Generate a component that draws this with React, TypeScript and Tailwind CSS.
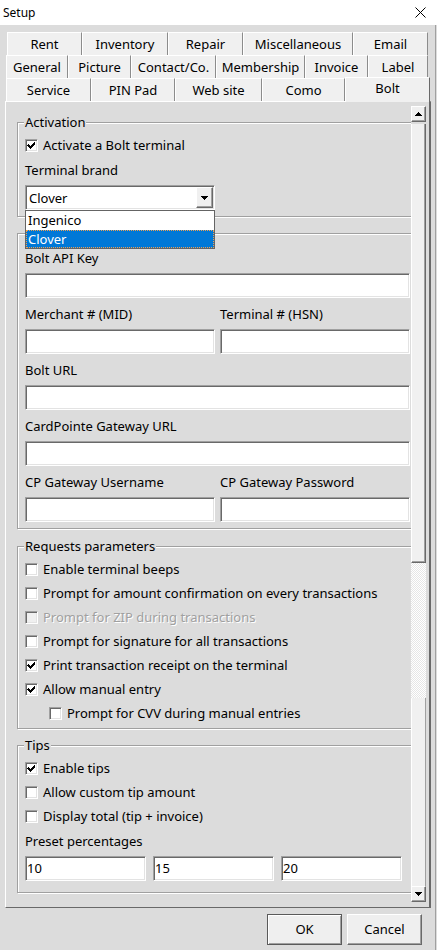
import React from "react";

type TabDef = { label: string; w: string; selected?: boolean };

const row1: TabDef[] = [
  { label: "Rent", w: "w-[75px]" },
  { label: "Inventory", w: "w-[86px]" },
  { label: "Repair", w: "w-[75px]" },
  { label: "Miscellaneous", w: "w-[110px]" },
  { label: "Email", w: "w-[75px]" },
];

const row2: TabDef[] = [
  { label: "General", w: "w-[62px]" },
  { label: "Picture", w: "w-[63px]" },
  { label: "Contact/Co.", w: "w-[85px]" },
  { label: "Membership", w: "w-[89px]" },
  { label: "Invoice", w: "w-[63px]" },
  { label: "Label", w: "w-[60px]" },
];

const row3: TabDef[] = [
  { label: "Service", w: "w-[85px]" },
  { label: "PIN Pad", w: "w-[84px]" },
  { label: "Web site", w: "w-[87px]" },
  { label: "Como", w: "w-[83px]" },
  { label: "Bolt", w: "w-[85px]", selected: true },
];

function Tab({ tab }: { tab: TabDef }) {
  if (tab.selected) {
    return (
      <div
        className={`${tab.w} relative z-10 -mt-px h-[25px] pb-[3px] flex items-center justify-center bg-[#f0f0f0] border-t border-l border-t-white border-l-white border-r border-r-[#696969]`}
      >
        {tab.label}
      </div>
    );
  }
  return (
    <div
      className={`${tab.w} h-[23px] flex items-center justify-center bg-[#f0f0f0] border-t border-l border-t-white border-l-white border-r border-r-[#8c8c8c]`}
    >
      {tab.label}
    </div>
  );
}

function Tick() {
  return (
    <svg width="9" height="9" viewBox="0 0 9 9" shapeRendering="crispEdges">
      <path d="M1 3h1v1h1v1h1v-1h1v-1h1v-1h1v-1h1v3h-1v1h-1v1h-1v1h-1v1h-1v-1h-1v-1h-1v-1h-1z" fill="#000" />
    </svg>
  );
}

function Check({ checked, disabled }: { checked?: boolean; disabled?: boolean }) {
  return (
    <span
      className={`w-[13px] h-[13px] shrink-0 flex items-center justify-center border border-t-[#a0a0a0] border-l-[#a0a0a0] border-b-white border-r-white shadow-[inset_1px_1px_0_#696969,inset_-1px_-1px_0_#e3e3e3] ${
        disabled ? "bg-[#f0f0f0]" : "bg-white"
      }`}
    >
      {checked && <Tick />}
    </span>
  );
}

function CheckRow({
  label,
  checked,
  disabled,
  indent,
}: {
  label: string;
  checked?: boolean;
  disabled?: boolean;
  indent?: boolean;
}) {
  return (
    <div className={`h-[24px] flex items-center gap-[5px] ${indent ? "pl-[24px]" : ""}`}>
      <Check checked={checked} disabled={disabled} />
      <span className={disabled ? "text-[#a0a0a0] [text-shadow:1px_1px_0_#ffffff]" : ""}>{label}</span>
    </div>
  );
}

function Field({ value, className = "" }: { value?: string; className?: string }) {
  return (
    <div
      className={`h-[25px] bg-white flex items-center pl-px border border-t-[#a0a0a0] border-l-[#a0a0a0] border-b-white border-r-white shadow-[inset_1px_1px_0_#696969,inset_-1px_-1px_0_#e3e3e3] ${className}`}
    >
      {value}
    </div>
  );
}

function Label({ text, className = "" }: { text: string; className?: string }) {
  return <div className={`h-[20px] flex items-center ${className}`}>{text}</div>;
}

function Group({
  label,
  className = "",
  children,
}: {
  label?: string;
  className?: string;
  children: React.ReactNode;
}) {
  return (
    <div
      className={`relative ml-[11px] w-[401px] pl-[7px] border border-[#a0a0a0] shadow-[inset_1px_1px_0_#ffffff,1px_1px_0_#ffffff] ${className}`}
    >
      {label && (
        <span className="absolute left-[6px] -top-[10px] h-[18px] pl-px pr-px leading-[18px] bg-[#dcdcdc]">
          {label}
        </span>
      )}
      {children}
    </div>
  );
}

function Arrow({ up }: { up?: boolean }) {
  return (
    <svg width="7" height="4" viewBox="0 0 7 4" shapeRendering="crispEdges">
      {up ? (
        <path d="M3 0h1v1h1v1h1v1h1v1h-7v-1h1v-1h1v-1h1z" fill="#000" />
      ) : (
        <path d="M0 0h7v1h-1v1h-1v1h-1v1h-1v-1h-1v-1h-1v-1h-1z" fill="#000" />
      )}
    </svg>
  );
}

function ScrollButton({ up }: { up?: boolean }) {
  return (
    <div className="h-[16px] flex items-center justify-center bg-[#f0f0f0] border border-t-white border-l-white border-r-[#696969] border-b-[#696969] shadow-[inset_-1px_-1px_0_#a0a0a0]">
      <Arrow up={up} />
    </div>
  );
}

function ScrollBar() {
  return (
    <div className="w-[15px] h-full flex flex-col pt-px">
      <ScrollButton up />
      <div className="h-[2px]" />
      <div className="h-[439px] bg-[#f0f0f0] border-l border-l-white border-r border-b border-r-[#696969] border-b-[#696969] shadow-[inset_-1px_-1px_0_#a0a0a0]" />
      <div className="h-[135px] bg-[repeating-conic-gradient(#ffffff_0%_25%,#e6e6e6_0%_50%)] bg-[length:2px_2px]" />
      <div className="h-[188px] bg-[#f0f0f0] border-l border-l-white border-r border-r-[#a0a0a0]" />
      <ScrollButton />
    </div>
  );
}

function BrandCombo() {
  return (
    <div className="relative mt-[5px] w-[190px]">
      <div className="h-[25px] bg-white flex items-center justify-between pl-[3px] pr-px border border-t-[#a0a0a0] border-l-[#a0a0a0] border-b-white border-r-white shadow-[inset_1px_1px_0_#696969,inset_-1px_-1px_0_#e3e3e3]">
        <span className="pt-px">Clover</span>
        <div className="w-[17px] h-[21px] flex items-center justify-center bg-[#f0f0f0] border border-t-white border-l-white border-r-[#696969] border-b-[#696969] shadow-[inset_-1px_-1px_0_#a0a0a0]">
          <Arrow />
        </div>
      </div>
      {/* open drop list */}
      <div className="absolute left-0 top-[25px] z-20 w-[190px] bg-white border border-[#646464]">
        <div className="h-[19px] flex items-center pl-[2px]">Ingenico</div>
        <div className="h-[18px] flex items-center pl-[1px] bg-[#0078d7] text-white border border-dotted border-[#f0a050]">
          Clover
        </div>
      </div>
    </div>
  );
}

function BoltPage() {
  return (
    <div className="w-[405px] h-[798px] overflow-hidden">
      <div className="pt-[17px]">
        <Group label="Activation" className="pt-[12px] pb-[6px]">
          <div className="h-[20px] flex items-center gap-[5px]">
            <Check checked />
            <span>Activate a Bolt terminal</span>
          </div>
          <Label text="Terminal brand" className="mt-[5px]" />
          <BrandCombo />
        </Group>

        <Group className="mt-[16px] pt-[14px] pb-[6px]">
          <Label text="Bolt API Key" />
          <Field className="mt-[5px] w-[385px]" />
          <div className="mt-[6px] flex gap-[5px]">
            <div className="w-[190px]">
              <Label text="Merchant # (MID)" />
              <Field className="mt-[5px]" />
            </div>
            <div className="w-[190px]">
              <Label text="Terminal # (HSN)" />
              <Field className="mt-[5px]" />
            </div>
          </div>
          <Label text="Bolt URL" className="mt-[6px]" />
          <Field className="mt-[5px] w-[385px]" />
          <Label text="CardPointe Gateway URL" className="mt-[6px]" />
          <Field className="mt-[5px] w-[385px]" />
          <div className="mt-[6px] flex gap-[5px]">
            <div className="w-[190px]">
              <Label text="CP Gateway Username" />
              <Field className="mt-[5px]" />
            </div>
            <div className="w-[190px]">
              <Label text="CP Gateway Password" />
              <Field className="mt-[5px]" />
            </div>
          </div>
        </Group>

        <Group label="Requests parameters" className="mt-[17px] pt-[10px] pb-[3px]">
          <CheckRow label="Enable terminal beeps" />
          <CheckRow label="Prompt for amount confirmation on every transactions" />
          <CheckRow label="Prompt for ZIP during transactions" disabled />
          <CheckRow label="Prompt for signature for all transactions" />
          <CheckRow label="Print transaction receipt on the terminal" checked />
          <CheckRow label="Allow manual entry" checked />
          <CheckRow label="Prompt for CVV during manual entries" indent />
        </Group>

        <Group label="Tips" className="mt-[16px] pt-[10px] pb-[11px]">
          <CheckRow label="Enable tips" checked />
          <CheckRow label="Allow custom tip amount" />
          <CheckRow label="Display total (tip + invoice)" />
          <Label text="Preset percentages" className="mt-[3px]" />
          <div className="mt-[5px] flex gap-[7px]">
            <Field value="10" className="w-[121px]" />
            <Field value="15" className="w-[121px]" />
            <Field value="20" className="w-[121px]" />
          </div>
        </Group>
      </div>
    </div>
  );
}

export default function App() {
  return (
    <div className="w-[437px] h-[950px] bg-[#dcdcdc] text-black text-[13px] leading-none font-['Noto_Sans','Open_Sans',sans-serif] overflow-hidden">
      {/* title bar */}
      <div className="h-[25px] bg-white flex items-center justify-between pl-[3px] pr-[11px]">
        <span className="text-[12px]">Setup</span>
        <svg width="11" height="11" viewBox="0 0 11 11">
          <path d="M0.5 0.5L10.5 10.5M10.5 0.5L0.5 10.5" stroke="#000" strokeWidth="1" />
        </svg>
      </div>

      <div className="flex">
        <div className="w-[435px]">
          {/* tab strip */}
          <div className="pt-[7px]">
            <div className="ml-[7px] flex">
              {row1.map((t) => (
                <Tab key={t.label} tab={t} />
              ))}
            </div>
            <div className="ml-[6px] flex">
              {row2.map((t) => (
                <Tab key={t.label} tab={t} />
              ))}
            </div>
            <div className="ml-[6px] h-[23px] flex items-start">
              {row3.map((t) => (
                <Tab key={t.label} tab={t} />
              ))}
            </div>
          </div>

          {/* tab page */}
          <div className="ml-[5px] w-[426px] h-[807px] flex pt-[3px] pb-[4px] border-l border-t border-l-white border-t-white border-r-2 border-r-[#696969] border-b border-b-[#696969]">
            <BoltPage />
            <ScrollBar />
          </div>

          {/* dialog buttons */}
          <div className="pt-[6px] pr-[13px] flex justify-end gap-[5px]">
            <button className="w-[75px] h-[31px] bg-[#efefef] border border-[#5a5a5a] shadow-[inset_1px_1px_0_#ffffff,inset_-1px_-1px_0_#a0a0a0]">
              OK
            </button>
            <button className="w-[75px] h-[31px] bg-[#efefef] border border-t-white border-l-white border-r-[#696969] border-b-[#696969] shadow-[inset_-1px_-1px_0_#a0a0a0]">
              Cancel
            </button>
          </div>
        </div>
        <div className="w-px h-[925px] bg-[#a0a0a0]" />
      </div>
    </div>
  );
}
